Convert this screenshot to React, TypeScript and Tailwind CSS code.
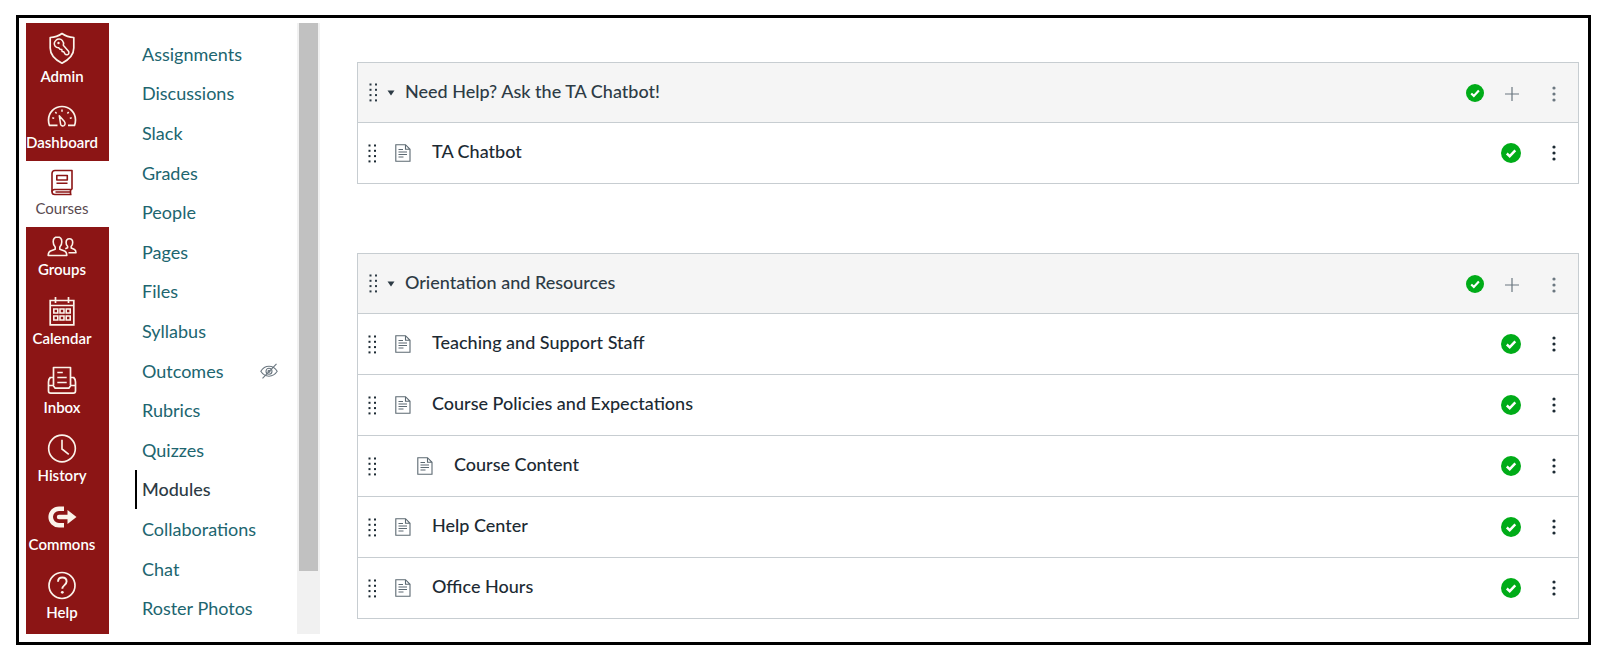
import type { ReactNode } from "react";

type NavItem = { label: string; icon: ReactNode; active?: boolean };

const AdminIcon = () => (
  <svg width="28" height="33" viewBox="0 0 28 33" fill="none" stroke="currentColor" strokeWidth="1.7" strokeLinejoin="round">
    <path d="M14 2.5C10.5 5 6.5 6.3 2.2 6.5V17c0 7 4.500 11.500 11.800 15.200C21.300 28.500 25.800 24 25.800 17V6.500C21.500 6.300 17.500 5 14 2.500Z" />
    <path d="M8 9.300C9.700 7.600 12.700 7.700 14.300 9.400c1.300 1.400 1.600 3.100 1 4.800l5.200 6c.7.900.5 2.900-.7 3.300-1.300.4-2.300.1-3-.8l-1-1.900-1.700-.4-.3-1.800-1.800-.4-1.300-1.500c-1.400.1-2.600-.4-3.500-1.500C5.800 13.200 6.200 11 8 9.300Z" strokeWidth="1.5" />
    <circle cx="10.500" cy="12" r="1.200" fill="currentColor" stroke="none" />
  </svg>
);

const DashboardIcon = () => (
  <svg width="30" height="27" viewBox="0 0 30 27" fill="none" stroke="currentColor" strokeWidth="1.7" strokeLinejoin="round">
    <path d="M10.500 22.300H2.500C1.700 20.400 1.500 19 1.500 17a13.500 13.500 0 0 1 27 0c0 2-.2 3.400-1 5.300h-6.500" />
    <path d="M12.300 12.800l5.100 5.800c1 1.400.9 3.200-.4 4-1.300.7-2.900.1-3.400-1.400Z" strokeWidth="1.5" />
    <path d="M15 6.500v2.200M8.300 9l1.300 1.500M21.700 9l-1.300 1.500M5.300 14.700l1.900.7M24.700 14.700l-1.900.7" strokeWidth="1.5" />
  </svg>
);

const CoursesIcon = () => (
  <svg width="24" height="27" viewBox="0 0 24 27" fill="none" stroke="currentColor" strokeWidth="1.600" strokeLinejoin="round">
    <path d="M22 20.500V1.500H5C3.200 1.500 2 2.700 2 4.500v18.200c0 1.700 1.100 2.800 2.800 2.800H21.500" />
    <path d="M22 20.500H4.500C3 20.500 2 21.400 2 22.800M5.500 23h15.500M20.500 20.500v5" />
    <path d="M6.800 6.500h10.500v4.500H6.800ZM6.500 14.300h11" />
  </svg>
);

const GroupsIcon = () => (
  <svg width="30" height="22" viewBox="0 0 30 22" fill="none" stroke="currentColor" strokeWidth="1.600" strokeLinejoin="round">
    <path d="M10.500 2c-2.700 0-4.300 1.800-4.300 4.700 0 2.300.8 4.200 2 5.300v2.200l-4.700 1.700C1.900 16.600 1.200 18 1.200 20.500h18.600c0-2.500-.7-3.900-2.300-4.600l-4.700-1.700V12c1.200-1.100 2-3 2-5.300C14.800 3.800 13.200 2 10.500 2Z" />
    <path d="M18.300 13.800l2.300-1v-1.500c-1-.8-1.500-2.100-1.500-3.800 0-2.300 1.200-3.800 3.300-3.800s3.300 1.500 3.300 3.800c0 1.700-.5 3-1.500 3.800v1.700l2.900 1.200c1.400.6 1.900 1.700 1.900 3.600H21.500" />
  </svg>
);

const CalendarIcon = () => (
  <svg width="26" height="30" viewBox="0 0 26 30" fill="none" stroke="currentColor" strokeWidth="1.700">
    <path d="M1.200 4.500h23.600v24.300H1.200ZM1.200 9.500h23.600M6.500 1v6M19.500 1v6" />
    <path d="M4.800 13h4v4h-4ZM11 13h4v4h-4ZM17.200 13h4v4h-4ZM4.800 20h4v4h-4ZM11 20h4v4h-4ZM17.200 20h4v4h-4Z" strokeWidth="1.600" />
  </svg>
);

const InboxIcon = () => (
  <svg width="30" height="30" viewBox="0 0 30 30" fill="none" stroke="currentColor" strokeWidth="1.700" strokeLinejoin="round">
    <path d="M6.500 20V2.500h17V20M6.500 12.500H3.300C2.200 13.500 1.500 15 1.500 17v9c0 1.400.8 2.200 2.200 2.200h22.600c1.400 0 2.200-.8 2.200-2.200v-9c0-2-.7-3.500-1.800-4.500h-3.200" />
    <path d="M1.500 20.500h4.700l2 2.700h13.600l2-2.700h4.700M10.300 7.500h5.500M10.300 12.500h9.400M10.300 17.500h9.400" />
  </svg>
);

const HistoryIcon = () => (
  <svg width="30" height="29" viewBox="0 0 30 30" fill="none" stroke="currentColor" strokeWidth="1.700">
    <circle cx="15" cy="15" r="13.800" />
    <path d="M15 6v9.500l7 5.500" />
  </svg>
);

const CommonsIcon = () => (
  <svg width="30" height="30" viewBox="0 0 30 30" fill="none" stroke="currentColor">
    <path d="M17 6.700H12a8.300 8.300 0 0 0 0 16.600h5" strokeWidth="4.600" />
    <path d="M12 15h10" strokeWidth="4.400" strokeLinecap="round" />
    <path d="M20.500 8l9 7-9 7Z" fill="currentColor" stroke="none" />
  </svg>
);

const HelpIcon = () => (
  <svg width="29" height="29" viewBox="0 0 29 29" fill="none" stroke="currentColor" strokeWidth="1.700">
    <circle cx="14" cy="14.500" r="13" />
    <path d="M10 10.800c0-2.600 1.700-4.300 4.300-4.300s4.300 1.600 4.300 4c0 3.500-4.300 3.700-4.300 7.300" strokeWidth="1.900" />
    <circle cx="14.300" cy="21.300" r="1.400" fill="currentColor" stroke="none" />
  </svg>
);

const HiddenIcon = () => (
  <svg width="18" height="16" viewBox="0 0 18 16" fill="none" stroke="currentColor" strokeWidth="1.100" aria-label="Hidden">
    <path d="M.8 8.300C2.800 5 5.700 3.300 9 3.300s6.200 1.700 8.200 5c-2 3.200-4.900 4.900-8.200 4.900S2.800 11.500.8 8.300ZM16.500.8L2.500 15.300" />
    <circle cx="9" cy="8.200" r="3" />
    <circle cx="9" cy="8.200" r="1" />
  </svg>
);

const DragIcon = () => (
  <svg width="9" height="19" viewBox="0 0 9 19" fill="currentColor">
    {[0.5, 5.8, 11.1, 16.4].map((y) => (
      <g key={y}>
        <rect x="0.5" y={y} width="2" height="2" />
        <rect x="6" y={y} width="2" height="2" />
      </g>
    ))}
  </svg>
);

const PageIcon = () => (
  <svg width="16" height="18" viewBox="0 0 16 18" fill="none" stroke="#5c6972" strokeWidth="1.100">
    <path d="M.8.700h9.700l4.500 4.600v12H.8ZM10.500.7v4.600h4.500" />
    <path d="M3.500 5.500H8M3.500 8h8.500M3.500 10.500h8.500M3.500 13h5" />
  </svg>
);

const CheckIcon = ({ className }: { className: string }) => (
  <svg className={className} viewBox="0 0 20 20" fill="none">
    <circle cx="10" cy="10" r="10" fill="#00ac18" />
    <path d="M5.800 10.500l2.900 2.700 5.600-5.900" stroke="#fff" strokeWidth="2.400" />
  </svg>
);

const MoreIcon = () => (
  <svg width="4" height="16" viewBox="0 0 4 16" fill="currentColor">
    <circle cx="2" cy="2" r="1.600" />
    <circle cx="2" cy="8" r="1.600" />
    <circle cx="2" cy="14" r="1.600" />
  </svg>
);

const navItems: NavItem[] = [
  { label: "Admin", icon: <AdminIcon /> },
  { label: "Dashboard", icon: <DashboardIcon /> },
  { label: "Courses", icon: <CoursesIcon />, active: true },
  { label: "Groups", icon: <GroupsIcon /> },
  { label: "Calendar", icon: <CalendarIcon /> },
  { label: "Inbox", icon: <InboxIcon /> },
  { label: "History", icon: <HistoryIcon /> },
  { label: "Commons", icon: <CommonsIcon /> },
  { label: "Help", icon: <HelpIcon /> },
];

const courseLinks = [
  "Assignments",
  "Discussions",
  "Slack",
  "Grades",
  "People",
  "Pages",
  "Files",
  "Syllabus",
  "Outcomes",
  "Rubrics",
  "Quizzes",
  "Modules",
  "Collaborations",
  "Chat",
  "Roster Photos",
];

const modules = [
  { title: "Need Help? Ask the TA Chatbot!", items: [{ title: "TA Chatbot", indent: false }] },
  {
    title: "Orientation and Resources",
    items: [
      { title: "Teaching and Support Staff", indent: false },
      { title: "Course Policies and Expectations", indent: false },
      { title: "Course Content", indent: true },
      { title: "Help Center", indent: false },
      { title: "Office Hours", indent: false },
    ],
  },
];

const GlobalNav = () => (
  <nav className="w-[83px] shrink-0 bg-[#8c1515] pb-[3px]">
    {navItems.map(({ label, icon, active }) => (
      <a
        key={label}
        href="#"
        className={`flex flex-col items-center gap-0.5 pt-2 pr-[11px] pb-[9px] text-[15px] leading-5 ${
          active ? "bg-white text-[#8c1515]" : "font-semibold text-[#fbf3ea]"
        }`}
      >
        {icon}
        <span className={active ? "text-[#5a4a50]" : "text-white"}>{label}</span>
      </a>
    ))}
  </nav>
);

const CourseMenu = () => (
  <nav className="flex w-[188px] shrink-0 flex-col pt-[11px] pr-[19px] pb-1.5 pl-[26px]">
    {courseLinks.map((label) => (
      <a
        key={label}
        href="#"
        className={`flex flex-1 items-center justify-between border-l-2 pl-[5px] text-lg leading-6 ${
          label === "Modules" ? "border-black font-medium text-[#2d3b45]" : "border-transparent text-[#20656f]"
        }`}
      >
        {label}
        {label === "Outcomes" && (
          <span className="text-[#6b7780]">
            <HiddenIcon />
          </span>
        )}
      </a>
    ))}
  </nav>
);

const Modules = () => (
  <main className="flex flex-1 flex-col gap-[69px] pt-[39px] pr-[9px] pl-[37px] text-lg leading-6 font-medium">
    {modules.map((module) => (
      <section key={module.title} className="border border-[#c7cdd1]">
        <header className="flex h-[59px] items-center bg-[#f5f5f5] pr-[22px] pl-[11px] text-[#2d3b45]">
          <DragIcon />
          <button className="ml-[9px] flex items-center gap-2.5">
            <svg width="8" height="6" viewBox="0 0 8 6" fill="currentColor">
              <path d="M.5.500h7L4 5.500Z" />
            </svg>
            <h2 className="pb-1">{module.title}</h2>
          </button>
          <div className="ml-auto flex items-center text-[#6b7780]">
            <CheckIcon className="h-[18px] w-[18px]" />
            <button className="ml-[21px] pt-[3px]" aria-label="Add item">
              <svg width="14" height="14" viewBox="0 0 14 14" stroke="currentColor" strokeWidth="1.200">
                <path d="M7 0v14M0 7h14" />
              </svg>
            </button>
            <button className="ml-[33px] pt-[3px]" aria-label="Module options">
              <MoreIcon />
            </button>
          </div>
        </header>
        <ul>
          {module.items.map((item) => (
            <li key={item.title} className="flex h-[61px] items-center border-t border-[#c7cdd1] pr-[22px] pl-2.5 text-[#1c2a33]">
              <DragIcon />
              <span className={item.indent ? "ml-10" : "ml-[18px]"}>
                <PageIcon />
              </span>
              <a href="#" className="ml-[21px] pb-1">
                {item.title}
              </a>
              <CheckIcon className="ml-auto h-5 w-5" />
              <button className="ml-[31px]" aria-label="Item options">
                <MoreIcon />
              </button>
            </li>
          ))}
        </ul>
      </section>
    ))}
  </main>
);

export default function App() {
  return (
    <div className="min-h-screen bg-white pt-[15px] pr-[27px] pb-5 pl-4 font-[Lato,sans-serif]">
      <div className="flex border-3 border-black pt-[5px] pb-2 pl-[7px]">
        <GlobalNav />
        <CourseMenu />
        <div className="w-[23px] shrink-0 bg-[#f1f1f1] px-0.5">
          <div className="h-[548px] bg-[#c1c1c1]" />
        </div>
        <Modules />
      </div>
    </div>
  );
}
